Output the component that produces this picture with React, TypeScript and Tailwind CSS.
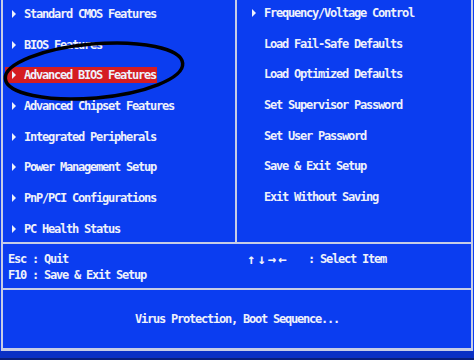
const leftItems = [
  'Standard CMOS Features',
  'BIOS Features',
  'Advanced BIOS Features',
  'Advanced Chipset Features',
  'Integrated Peripherals',
  'Power Management Setup',
  'PnP/PCI Configurations',
  'PC Health Status',
];

const rightItems = [
  { label: 'Frequency/Voltage Control', arrow: true },
  { label: 'Load Fail-Safe Defaults', arrow: false },
  { label: 'Load Optimized Defaults', arrow: false },
  { label: 'Set Supervisor Password', arrow: false },
  { label: 'Set User Password', arrow: false },
  { label: 'Save & Exit Setup', arrow: false },
  { label: 'Exit Without Saving', arrow: false },
];

// little right-pointing marker in front of sub menus
const Marker = ({ hidden = false }: { hidden?: boolean }) => (
  <span
    className={`w-0 h-0 border-y-[4px] border-y-transparent border-l-[4px] border-l-[#eef1fb] ${hidden ? 'invisible' : ''}`}
  />
);

export default function App() {
  return (
    <div
      className="relative w-[474px] h-[360px] overflow-hidden bg-[#0b3df0] text-[#eef1fb] text-[12px] font-bold tracking-[-1.22px]"
      style={{ fontFamily: '"DejaVu Sans Mono", "Liberation Mono", monospace' }}
    >
      <div className="ml-[1px] w-[472px] h-[351px] border-x-2 border-b-[3px] border-[#c6cde6] flex flex-col">
        {/* menu area */}
        <div className="flex h-[242px]">
          <div className="w-[234px] border-r-2 border-[#c6cde6] flex flex-col pt-[6px] gap-[14.7px]">
            {leftItems.map((item, i) => (
              <div
                key={item}
                className={`ml-[2px] pl-[7px] pr-[1px] h-[16px] w-fit flex items-center gap-[8px] leading-none ${i === 2 ? 'bg-[#d51c22]' : ''}`}
              >
                <Marker />
                <span>{item}</span>
              </div>
            ))}
          </div>
          <div className="flex-1 flex flex-col pt-[5px] gap-[14.7px]">
            {rightItems.map((item) => (
              <div key={item.label} className="pl-[15px] h-[16px] flex items-center gap-[8px] leading-none">
                <Marker hidden={!item.arrow} />
                <span>{item.label}</span>
              </div>
            ))}
          </div>
        </div>

        {/* key help */}
        <div className="h-[48px] border-y-2 border-[#c6cde6] flex pt-[7px] leading-[16px]">
          <div className="w-[244px] pl-[5px]">
            <div>Esc : Quit</div>
            <div>F10 : Save &amp; Exit Setup</div>
          </div>
          <div className="flex">
            <span className="w-[61px] text-[14px] tracking-[2px]">↑↓→←</span>
            <span>: Select Item</span>
          </div>
        </div>

        {/* item description */}
        <div className="flex-1 flex items-center justify-center">
          <span>Virus Protection, Boot Sequence...</span>
        </div>
      </div>
      <div className="h-[9px] bg-[#0a30c4] border-b-2 border-[#0a1f7a]" />

      {/* hand drawn marker circle */}
      <svg className="absolute left-0 top-0 pointer-events-none" width="200" height="110" viewBox="0 0 200 110">
        <ellipse cx="94" cy="71" rx="89" ry="27" fill="none" stroke="#000" strokeWidth="3.5" transform="rotate(-5 94 71)" />
      </svg>
    </div>
  );
}
